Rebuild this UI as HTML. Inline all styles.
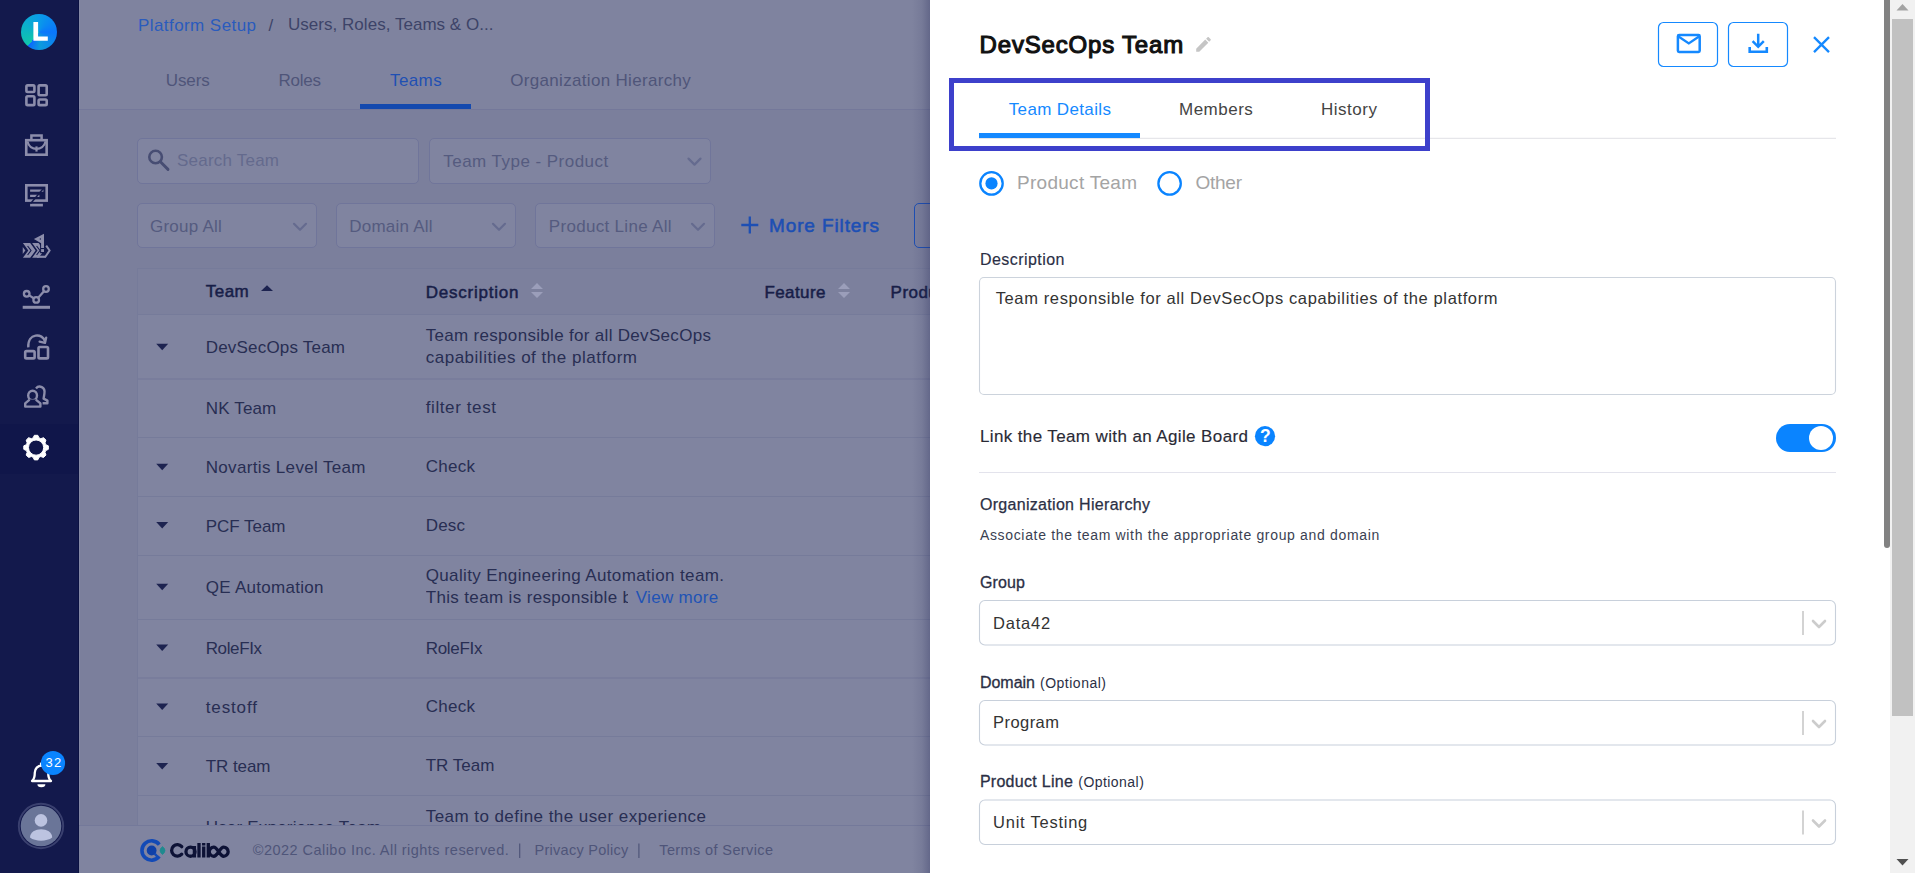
<!DOCTYPE html>
<html><head><meta charset="utf-8"><title>Teams</title>
<style>
html,body{margin:0;padding:0}
body{width:1915px;height:873px;overflow:hidden;position:relative;background:#7b7f9c;font-family:"Liberation Sans",sans-serif}
.abs,.t,svg.i{position:absolute}
.t{white-space:pre;line-height:normal}
#side{left:0;top:0;width:78px;height:873px;background:#13194c;border-right:1px solid #0b1142}
#main{left:79px;top:0;width:851px;height:873px;overflow:hidden;background:#7b7f9c}
#main .in{position:absolute;left:-79px;top:0;width:1915px;height:873px}
.box{position:absolute;box-sizing:border-box;border:1px solid #70759a;border-radius:5px;background:#8084a0}
.hl{position:absolute;height:1px;background:#767b9a}
#panel{left:930px;top:0;width:960px;height:873px;background:#fff}
#panel .in{position:absolute;left:-930px;top:0;width:1915px;height:873px}
</style></head>
<body>
<!-- ================= dimmed main area ================= -->
<div id="main" class="abs"><div class="in">
  <div class="abs" style="left:79px;top:0;width:860px;height:109px;background:#7f839f"></div>
  <div class="abs" style="left:79px;top:0;width:1px;height:873px;background:#8488a4"></div>
  <div class="hl" style="left:79px;width:860px;top:109px;height:1px;background:#74789a"></div>
  <div class="abs" style="left:360px;top:104px;width:111px;height:5px;background:#1449ae"></div>
  <!-- search + filters -->
  <div class="box" style="left:137px;top:138px;width:282px;height:46px"></div>
  <div class="box" style="left:429px;top:138px;width:282px;height:46px"></div>
  <div class="box" style="left:137px;top:203px;width:180px;height:45px"></div>
  <div class="box" style="left:336px;top:203px;width:180px;height:45px"></div>
  <div class="box" style="left:535px;top:203px;width:180px;height:45px"></div>
  <div class="box" style="left:914px;top:203px;width:60px;height:45px;border-color:#1d4fb4;background:#7b7f9c"></div>
  <!-- table -->
  <div class="abs" style="left:137px;top:268px;width:820px;height:557px;background:#8084a0;border-left:1px solid #767b9a;border-top:1px solid #767b9a;box-sizing:border-box"></div>
  <div class="abs" style="left:138px;top:269px;width:820px;height:45px;background:#7c809d"></div>
  <div class="hl" style="left:138px;width:820px;top:314px;height:1px"></div><div class="hl" style="left:138px;width:820px;top:378px;height:2px;background:#797d9c"></div><div class="hl" style="left:138px;width:820px;top:437px;height:1px"></div><div class="hl" style="left:138px;width:820px;top:496px;height:1px"></div><div class="hl" style="left:138px;width:820px;top:555px;height:1px"></div><div class="hl" style="left:138px;width:820px;top:619px;height:1px"></div><div class="hl" style="left:138px;width:820px;top:677px;height:2px;background:#797d9c"></div><div class="hl" style="left:138px;width:820px;top:736px;height:1px"></div><div class="hl" style="left:138px;width:820px;top:795px;height:1px"></div>
  <svg class="i" style="left:79px;top:0px" width="851" height="825" viewBox="79 0 851 825" fill="none"><circle cx="155.6" cy="157" r="6.3" stroke="#474d73" stroke-width="2.6"/><path d="M160.4 161.8 L168 169.4" stroke="#474d73" stroke-width="2.9" stroke-linecap="round"/><path d="M688.5 158.6 L694.5 164.6 L700.5 158.6" stroke="#656b8f" stroke-width="2.2" stroke-linecap="round" stroke-linejoin="round"/><path d="M294 223.8 L300 229.8 L306 223.8" stroke="#656b8f" stroke-width="2.2" stroke-linecap="round" stroke-linejoin="round"/><path d="M493 223.8 L499 229.8 L505 223.8" stroke="#656b8f" stroke-width="2.2" stroke-linecap="round" stroke-linejoin="round"/><path d="M692 223.8 L698 229.8 L704 223.8" stroke="#656b8f" stroke-width="2.2" stroke-linecap="round" stroke-linejoin="round"/><path d="M749.8 216.5 V233.5 M741.3 225 H758.3" stroke="#1d4fb4" stroke-width="2.3"/><path d="M261 291 L273 291 L267 285.3 Z" fill="#1d2350"/><path d="M531 289 L543 289 L537 283 Z M531 292 L543 292 L537 298 Z" fill="#9b9eba"/><path d="M838 289 L850 289 L844 283 Z M838 292 L850 292 L844 298 Z" fill="#9b9eba"/><path d="M156.2 343.8 L168.2 343.8 L162.2 350.2 Z" fill="#1d2350"/><path d="M156.2 463.8 L168.2 463.8 L162.2 470.2 Z" fill="#1d2350"/><path d="M156.2 522.0999999999999 L168.2 522.0999999999999 L162.2 528.5 Z" fill="#1d2350"/><path d="M156.2 583.8 L168.2 583.8 L162.2 590.2 Z" fill="#1d2350"/><path d="M156.2 644.5 L168.2 644.5 L162.2 650.9000000000001 Z" fill="#1d2350"/><path d="M156.2 703.5 L168.2 703.5 L162.2 709.9000000000001 Z" fill="#1d2350"/><path d="M156.2 763.0 L168.2 763.0 L162.2 769.4000000000001 Z" fill="#1d2350"/><path d="M156.2 825.3 L168.2 825.3 L162.2 831.7 Z" fill="#1d2350"/></svg>
<span class="t" style="left:138.0px;top:16px;font-size:17px;color:#2a5bbd;letter-spacing:0.427px;">Platform Setup</span>
<span class="t" style="left:268.5px;top:16px;font-size:17px;color:#3d4368;">/</span>
<span class="t" style="left:288.0px;top:15px;font-size:17px;color:#3d4368;letter-spacing:0.032px;">Users, Roles, Teams &amp; O...</span>
<span class="t" style="left:165.7px;top:71px;font-size:17px;color:#4f5579;letter-spacing:-0.077px;">Users</span>
<span class="t" style="left:278.5px;top:71px;font-size:17px;color:#4f5579;letter-spacing:-0.242px;">Roles</span>
<span class="t" style="left:390.0px;top:71px;font-size:17px;color:#1f50b3;letter-spacing:0.405px;">Teams</span>
<span class="t" style="left:510.2px;top:71px;font-size:17px;color:#4f5579;letter-spacing:0.321px;">Organization Hierarchy</span>
<span class="t" style="left:177.0px;top:151px;font-size:17px;color:#646a8d;letter-spacing:0.214px;">Search Team</span>
<span class="t" style="left:443.3px;top:152px;font-size:17px;color:#555b7f;letter-spacing:0.464px;">Team Type - Product</span>
<span class="t" style="left:150.0px;top:217px;font-size:17px;color:#555b7f;letter-spacing:0.233px;">Group All</span>
<span class="t" style="left:349.3px;top:217px;font-size:17px;color:#555b7f;letter-spacing:0.215px;">Domain All</span>
<span class="t" style="left:548.8px;top:217px;font-size:17px;color:#555b7f;letter-spacing:0.311px;">Product Line All</span>
<span class="t" style="left:769.0px;top:215px;font-size:19px;color:#1d4fb4;letter-spacing:0.882px;-webkit-text-stroke:0.55px;">More Filters</span>
<span class="t" style="left:205.7px;top:282px;font-size:17px;color:#181e48;letter-spacing:0.507px;-webkit-text-stroke:0.5px;">Team</span>
<span class="t" style="left:425.7px;top:283px;font-size:17px;color:#181e48;letter-spacing:0.775px;-webkit-text-stroke:0.5px;">Description</span>
<span class="t" style="left:764.4px;top:283px;font-size:17px;color:#181e48;letter-spacing:0.418px;-webkit-text-stroke:0.5px;">Feature</span>
<span class="t" style="left:890.6px;top:283px;font-size:17px;color:#181e48;letter-spacing:0.468px;-webkit-text-stroke:0.5px;">Product</span>
<span class="t" style="left:205.7px;top:338px;font-size:17px;color:#282e53;letter-spacing:0.200px;">DevSecOps Team</span>
<span class="t" style="left:425.7px;top:326px;font-size:17px;color:#282e53;letter-spacing:0.313px;">Team responsible for all DevSecOps</span>
<span class="t" style="left:425.7px;top:348px;font-size:17px;color:#282e53;letter-spacing:0.511px;">capabilities of the platform</span>
<span class="t" style="left:205.7px;top:399px;font-size:17px;color:#282e53;letter-spacing:0.165px;">NK Team</span>
<span class="t" style="left:425.7px;top:398px;font-size:17px;color:#282e53;letter-spacing:0.605px;">filter test</span>
<span class="t" style="left:205.7px;top:458px;font-size:17px;color:#282e53;letter-spacing:0.339px;">Novartis Level Team</span>
<span class="t" style="left:425.7px;top:457px;font-size:17px;color:#282e53;letter-spacing:0.278px;">Check</span>
<span class="t" style="left:205.7px;top:517px;font-size:17px;color:#282e53;letter-spacing:-0.029px;">PCF Team</span>
<span class="t" style="left:425.7px;top:516px;font-size:17px;color:#282e53;letter-spacing:0.189px;">Desc</span>
<span class="t" style="left:205.7px;top:578px;font-size:17px;color:#282e53;letter-spacing:0.288px;">QE Automation</span>
<span class="t" style="left:425.7px;top:566px;font-size:17px;color:#282e53;letter-spacing:0.369px;">Quality Engineering Automation team.</span>
<span class="t" style="left:425.7px;top:588px;font-size:17px;color:#282e53;letter-spacing:0.353px;width:202px;overflow:hidden;">This team is responsible b</span>
<span class="t" style="left:635.7px;top:588px;font-size:17px;color:#1f53b5;letter-spacing:0.325px;">View more</span>
<span class="t" style="left:205.7px;top:639px;font-size:17px;color:#282e53;letter-spacing:-0.380px;">RoleFIx</span>
<span class="t" style="left:425.7px;top:639px;font-size:17px;color:#282e53;letter-spacing:-0.296px;">RoleFIx</span>
<span class="t" style="left:205.7px;top:698px;font-size:17px;color:#282e53;letter-spacing:0.883px;">testoff</span>
<span class="t" style="left:425.7px;top:697px;font-size:17px;color:#282e53;letter-spacing:0.278px;">Check</span>
<span class="t" style="left:205.7px;top:757px;font-size:17px;color:#282e53;letter-spacing:-0.065px;">TR team</span>
<span class="t" style="left:425.7px;top:756px;font-size:17px;color:#282e53;letter-spacing:0.024px;">TR Team</span>
<span class="t" style="left:205.7px;top:818px;font-size:17px;color:#282e53;letter-spacing:0.192px;">User Experience Team</span>
<span class="t" style="left:425.7px;top:807px;font-size:17px;color:#282e53;letter-spacing:0.447px;">Team to define the user experience</span>
  <!-- footer -->
  <div class="abs" style="left:79px;top:825px;width:860px;height:48px;background:#8084a0;border-top:1px solid #74799a;box-sizing:border-box"></div>
  <svg class="i" style="left:79px;top:825px" width="851" height="48" viewBox="79 825 851 48" fill="none"><path d="M159.29 844.53 A9.7 9.7 0 1 0 159.29 856.47" stroke="#134ab6" stroke-width="3.6"/><circle cx="151.65" cy="850.5" r="4.9" fill="#0f40a8"/><path d="M154.6 853.6 L158.6 858" stroke="#134ab6" stroke-width="2.4"/><path d="M162.5 846.5 Q167.4 850.5 162.5 854.5 Q157.6 850.5 162.5 846.5 Z" fill="#1f8a8f" stroke="#1f8a8f" stroke-width="0.8" stroke-linejoin="round"/><g stroke="#0d1236" stroke-width="3.3" fill="none"><path d="M181.75 846.7 A5.75 5.75 0 1 0 181.75 854.2" stroke-linecap="round"/><circle cx="190.5" cy="851.7" r="4.55"/><path d="M194.4 846 V857.6 M199 843.1 V857.6 M203.7 846.6 V857.6 M203.7 843.1 V845.4 M208.3 843.1 V857.6"/><path d="M218.7 851.7 C216.6 848.6 215.6 847.15 213.8 847.15 A4.55 4.55 0 1 0 213.8 856.25 C215.6 856.25 216.6 854.8 218.7 851.7 C220.8 848.6 221.8 847.15 223.6 847.15 A4.55 4.55 0 1 1 223.6 856.25 C221.8 856.25 220.8 854.8 218.7 851.7 Z" stroke-linejoin="round"/></g><path d="M519.7 843.5 V858 M638.9 843.5 V858" stroke="#4f5579" stroke-width="1.2"/></svg>
<span class="t" style="left:252.8px;top:842px;font-size:14.5px;color:#4f5579;letter-spacing:0.463px;">©2022 Calibo Inc. All rights reserved.</span>
<span class="t" style="left:534.5px;top:842px;font-size:14.5px;color:#4f5579;letter-spacing:0.273px;">Privacy Policy</span>
<span class="t" style="left:659.3px;top:842px;font-size:14.5px;color:#4f5579;letter-spacing:0.381px;">Terms of Service</span>
</div></div>
<!-- panel shadow -->
<div class="abs" style="left:912px;top:0;width:18px;height:873px;background:linear-gradient(to right,rgba(40,44,90,0),rgba(40,44,90,.10) 55%,rgba(40,44,90,.32))"></div>
<!-- ================= sidebar ================= -->
<div id="side" class="abs">
  <div class="abs" style="left:0;top:424px;width:78px;height:50px;background:#10164a"></div>
  <div class="abs" style="left:20.9px;top:13.8px;width:36.3px;height:36.3px;border-radius:50%;background:conic-gradient(from 218deg,#11c6aa 0deg,#0cb7c0 52deg,#0a9ce8 142deg,#0a76fc 232deg,#0d9bdc 318deg,#0a68ff 360deg)"></div>
  <svg class="i" style="left:0px;top:0px" width="78" height="873" viewBox="0 0 78 873" fill="none"><path d="M33.4 22 H38.1 V36.6 H47.8 V40.7 H33.4 Z" fill="#fff"/><g stroke="#8c8dab" stroke-width="2.6" stroke-linejoin="round"><rect x="26.4" y="85.4" width="8" height="6.6" rx="1.2"/><rect x="38.6" y="85.4" width="8.1" height="9.9" rx="1.2"/><rect x="26.4" y="96.2" width="8" height="8.9" rx="1.2"/><rect x="38.6" y="99.5" width="8.1" height="5.6" rx="1.2"/></g><g stroke="#8c8dab" stroke-width="2.6" stroke-linejoin="miter"><rect x="26.25" y="140.2" width="20.4" height="14.5"/><path d="M31.4 140 V135.4 H41.6 V140" stroke-width="2.5"/><path d="M27.5 141.5 C29.5 151.3 43.5 151.3 45.5 141.5" stroke-width="2.2"/><path d="M36.5 146.4 V151.6" stroke-width="2.2"/></g><g stroke="#8c8dab" stroke-width="2.6"><rect x="26.3" y="185.3" width="20.4" height="15.3"/><path d="M30.1 205.1 H42.9" stroke-width="2.7"/><path d="M30.1 190.6 H43.4 M30.1 195.8 H39.4" stroke-width="2.2"/><path d="M43.8 188 L30.6 203.4" stroke="#13194c" stroke-width="1.5"/></g><g fill="#8c8dab"><path d="M22.9 243 H30.2 L35.6 250.5 L30.2 257.85 H22.9 L28.3 250.5 Z"/><path d="M32.1 243 H38.6 L44 250.5 L38.6 257.85 H32.1 L37.5 250.5 Z"/><path d="M22.75 246.9 L25.4 250.5 L22.75 254.1 Z"/><rect x="37" y="255.7" width="9" height="2.15"/><path d="M46.2 245.6 L49.6 250.5 L45.2 257" fill="none" stroke="#8c8dab" stroke-width="2"/><path d="M27.6 246 L31 250.5 L27.6 255 M36.6 246 L40 250.5 L36.6 255" fill="none" stroke="#13194c" stroke-width="1.1"/><rect x="40.1" y="243" width="4.9" height="10.2" fill="#13194c"/><path d="M44 233.85 V248 H41.1 V243.3 L33.9 239 Z"/><rect x="41.1" y="249.1" width="2.9" height="2.9"/><circle cx="40.3" cy="239" r="0.65" fill="#13194c"/></g><g stroke="#8c8dab" stroke-width="2.3"><circle cx="26.7" cy="293.8" r="2.8"/><circle cx="36.2" cy="299.9" r="2.8"/><circle cx="46" cy="289" r="2.8"/><path d="M29.2 295.4 L33.7 298.3 M38.2 297.7 L44 291.2"/><path d="M22.7 307.3 H50" stroke-width="3"/></g><g stroke="#8c8dab" stroke-width="2.6" stroke-linejoin="round"><rect x="25.2" y="351.1" width="9.4" height="7.3" rx="1.2"/><rect x="38.5" y="347" width="9.5" height="11.4" rx="1.2"/><path d="M28.3 347.4 C27.4 332.6 43 332.6 45 341.6" fill="none" stroke-width="2.4"/><path d="M39.6 341.6 L45 342.9 L46.2 337.6" fill="none" stroke-width="2.3" stroke-linecap="round"/></g><g stroke="#8c8dab" stroke-width="2.4" stroke-linejoin="round" fill="none"><path d="M36 388.4 C39 384.6 45.6 387 44.4 393.6 L43.6 398.6 L47.4 400.6 V403.2 H42.6"/><ellipse cx="32.6" cy="395.4" rx="4.4" ry="4.7" fill="#13194c"/><path d="M29.6 399.6 L25.2 403.4 V406.6 H40.4 V403.4 L35.8 399.6" fill="#13194c"/></g><path d="M33.12 437.94 L34.34 435.32 L37.80 435.32 L39.02 437.94 L40.81 438.68 L43.53 437.70 L45.97 440.14 L44.99 442.86 L45.73 444.65 L48.35 445.87 L48.35 449.33 L45.73 450.55 L44.99 452.34 L45.97 455.06 L43.53 457.50 L40.81 456.52 L39.02 457.26 L37.80 459.88 L34.34 459.88 L33.12 457.26 L31.33 456.52 L28.61 457.50 L26.17 455.06 L27.15 452.34 L26.41 450.55 L23.79 449.33 L23.79 445.87 L26.41 444.65 L27.15 442.86 L26.17 440.14 L28.61 437.70 L31.33 438.68 Z M43.67 447.6 A7.6 7.6 0 1 0 28.47 447.6 A7.6 7.6 0 1 0 43.67 447.6 Z" fill="#fff" fill-rule="evenodd" stroke="#fff" stroke-width="1" stroke-linejoin="round"/><path d="M32 781 C34 779.6 34.8 777.4 34.8 772.6 A6.7 7 0 0 1 48.2 772.6 C48.2 777.4 49 779.6 51 781 Z" stroke="#fff" stroke-width="2.3" fill="none" stroke-linejoin="round"/><path d="M37.4 784.2 H45.4 A4 3 0 0 1 37.4 784.2 Z" fill="#fff"/><path d="M39.9 762.6 H42.9 V766 H39.9 Z" fill="#fff"/><circle cx="53" cy="763" r="12.1" fill="#0a84ff"/><circle cx="41" cy="826" r="22.2" stroke="#3a406f" stroke-width="1.9"/><circle cx="41" cy="826" r="20.3" fill="#6a7598"/><circle cx="41" cy="820.4" r="6.3" fill="#bcc3e0"/><path d="M30 837.6 C30 826.6 52.2 826.6 52.2 837.6 C47 841.8 35 841.8 30 837.6 Z" fill="#bcc3e0"/></svg>
<span class="t" style="left:45.6px;top:755px;font-size:13px;color:#fff;letter-spacing:1.131px;">32</span>
</div>
<!-- ================= right panel ================= -->
<div id="panel" class="abs"><div class="in">
  <svg class="i" style="left:930px;top:0px" width="960" height="873" viewBox="930 0 960 873" fill="none"><path transform="translate(1193.75 34.55) scale(0.817)" d="M3 17.25V21h3.75L17.81 9.94l-3.75-3.75L3 17.25zM20.71 7.04c.39-.39.39-1.02 0-1.41l-2.34-2.34c-.39-.39-1.02-.39-1.41 0l-1.83 1.83 3.75 3.75 1.83-1.83z" fill="#c5c5c5"/><rect x="1658.5" y="22.5" width="59" height="44" rx="5" stroke="#1589ff" stroke-width="1.2"/><rect x="1728.5" y="22.5" width="59" height="44" rx="5" stroke="#1589ff" stroke-width="1.2"/><rect x="1677.9" y="35.1" width="21.8" height="16.8" rx="1.2" stroke="#1589ff" stroke-width="2.5"/><path d="M1678.5 36.5 L1688.8 43.4 L1699 36.5" stroke="#1589ff" stroke-width="2.4"/><path d="M1758.2 33.8 V46.2 M1752.6 41.2 L1758.2 46.8 L1763.8 41.2" stroke="#1589ff" stroke-width="2.5"/><path d="M1749.7 47 V51.7 H1766.8 V47" stroke="#1589ff" stroke-width="2.6"/><path d="M1814 37.1 L1829 52.1 M1829 37.1 L1814 52.1" stroke="#1589ff" stroke-width="2.3"/><path d="M979 138.3 H1836" stroke="#e6e6ea" stroke-width="1.2"/><rect x="979" y="133" width="161" height="5" fill="#1589ff"/><rect x="951.5" y="80.5" width="476" height="68" stroke="#3d40cb" stroke-width="5"/><circle cx="991.5" cy="183.4" r="11.2" stroke="#0a84ff" stroke-width="2.3"/><circle cx="991.5" cy="183.4" r="6.1" fill="#0a84ff"/><circle cx="1169.6" cy="183.4" r="11.2" stroke="#0a84ff" stroke-width="2.3"/><rect x="979.5" y="277.5" width="856" height="117" rx="4.5" stroke="#ccd3dc" stroke-width="1.1" fill="#fff"/><circle cx="1265" cy="436.2" r="10.1" fill="#0a84ff"/><rect x="1776" y="424" width="60" height="28" rx="14" fill="#0a84ff"/><circle cx="1821" cy="438" r="12" fill="#fff"/><path d="M979 472.5 H1836" stroke="#e3e3ec" stroke-width="1.2"/><rect x="979.5" y="600.5" width="856" height="44.5" rx="5.5" stroke="#c8d0db" stroke-width="1.1" fill="#fff"/><path d="M1803 611 V635" stroke="#cfcfcf" stroke-width="1.8"/><path d="M1813 621 L1819 627 L1825 621" stroke="#cccccc" stroke-width="2.6" stroke-linecap="round" stroke-linejoin="round"/><rect x="979.5" y="700.5" width="856" height="44.5" rx="5.5" stroke="#c8d0db" stroke-width="1.1" fill="#fff"/><path d="M1803 711 V735" stroke="#cfcfcf" stroke-width="1.8"/><path d="M1813 721 L1819 727 L1825 721" stroke="#cccccc" stroke-width="2.6" stroke-linecap="round" stroke-linejoin="round"/><rect x="979.5" y="800.0" width="856" height="44.5" rx="5.5" stroke="#c8d0db" stroke-width="1.1" fill="#fff"/><path d="M1803 810.5 V834.5" stroke="#cfcfcf" stroke-width="1.8"/><path d="M1813 820.5 L1819 826.5 L1825 820.5" stroke="#cccccc" stroke-width="2.6" stroke-linecap="round" stroke-linejoin="round"/></svg>
<span class="t" style="left:979.6px;top:31px;font-size:24px;color:#111;letter-spacing:0.817px;-webkit-text-stroke:1.1px;">DevSecOps Team</span>
<span class="t" style="left:1008.7px;top:100px;font-size:17px;color:#1589ff;letter-spacing:0.367px;">Team Details</span>
<span class="t" style="left:1179.0px;top:100px;font-size:17px;color:#444;letter-spacing:0.490px;">Members</span>
<span class="t" style="left:1321.0px;top:100px;font-size:17px;color:#444;letter-spacing:0.516px;">History</span>
<span class="t" style="left:1017.0px;top:172px;font-size:19px;color:#a4a4a4;letter-spacing:0.283px;">Product Team</span>
<span class="t" style="left:1195.5px;top:172px;font-size:19px;color:#a4a4a4;letter-spacing:-0.258px;">Other</span>
<span class="t" style="left:979.9px;top:251px;font-size:16px;color:#2b2f45;letter-spacing:0.447px;-webkit-text-stroke:0.15px;">Description</span>
<span class="t" style="left:995.7px;top:289px;font-size:16.5px;color:#333;letter-spacing:0.624px;">Team responsible for all DevSecOps capabilities of the platform</span>
<span class="t" style="left:979.9px;top:427px;font-size:17px;color:#2a2a35;letter-spacing:0.384px;-webkit-text-stroke:0.15px;">Link the Team with an Agile Board</span>
<span class="t" style="left:979.9px;top:496px;font-size:16px;color:#2b2f45;letter-spacing:0.308px;-webkit-text-stroke:0.25px;">Organization Hierarchy</span>
<span class="t" style="left:979.9px;top:527px;font-size:14px;color:#3a3f52;letter-spacing:0.668px;">Associate the team with the appropriate group and domain</span>
<span class="t" style="left:979.9px;top:574px;font-size:16px;color:#2b2f45;letter-spacing:0.108px;-webkit-text-stroke:0.3px;">Group</span>
<span class="t" style="left:993.0px;top:614px;font-size:16.5px;color:#333;letter-spacing:0.796px;">Data42</span>
<span class="t" style="left:979.9px;top:674px;font-size:16px;color:#2b2f45;letter-spacing:-0.008px;-webkit-text-stroke:0.3px;">Domain</span>
<span class="t" style="left:1040.0px;top:675px;font-size:14px;color:#2b2f45;letter-spacing:0.503px;">(Optional)</span>
<span class="t" style="left:993.0px;top:713px;font-size:16.5px;color:#333;letter-spacing:0.453px;">Program</span>
<span class="t" style="left:979.9px;top:773px;font-size:16px;color:#2b2f45;letter-spacing:0.278px;-webkit-text-stroke:0.3px;">Product Line</span>
<span class="t" style="left:1078.3px;top:774px;font-size:14px;color:#2b2f45;letter-spacing:0.448px;">(Optional)</span>
<span class="t" style="left:993.1px;top:813px;font-size:16.5px;color:#333;letter-spacing:0.753px;">Unit Testing</span>
<span class="t" style="left:1259.9px;top:426px;font-size:17.5px;color:#fff;font-weight:700;">?</span>
</div></div>
<!-- inner scrollbar -->
<div class="abs" style="left:1884px;top:-6px;width:6px;height:554px;background:#828282;border-radius:3px"></div>
<!-- outer scrollbar -->
<div class="abs" style="left:1890px;top:0;width:25px;height:873px;background:#f1f1f1"></div>
<div class="abs" style="left:1892px;top:19px;width:21px;height:697px;background:#c1c1c1"></div>
<svg class="i" style="left:1890px;top:0" width="25" height="19" viewBox="0 0 25 19"><path d="M6.5 10.5 L12.5 4 L18.5 10.5 Z" fill="#a3a3a3"/></svg>
<svg class="i" style="left:1890px;top:853px" width="25" height="19" viewBox="0 0 25 19"><path d="M6.5 6 L18.5 6 L12.5 12.5 Z" fill="#505050"/></svg>
</body></html>
